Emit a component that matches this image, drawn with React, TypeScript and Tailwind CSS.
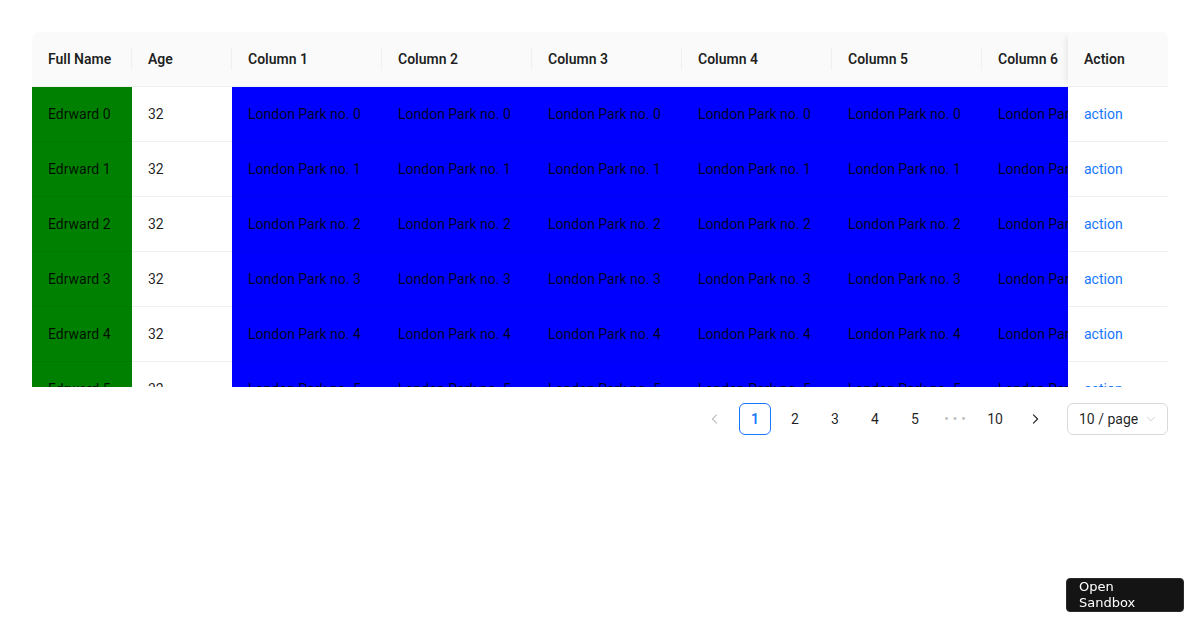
import { ChevronDown } from 'lucide-react'

const rows = Array.from({ length: 10 }, (_, i) => i)
const middleCols = [1, 2, 3, 4, 5, 6]

function Chevron({ dir, className }: { dir: 'left' | 'right'; className?: string }) {
  return (
    <svg width="12" height="12" viewBox="0 0 12 12" className={className} fill="none">
      <path
        d={dir === 'left' ? 'M7.6 1.8 3.4 6l4.2 4.2' : 'M4.4 1.8 8.6 6l-4.2 4.2'}
        stroke="currentColor"
        strokeWidth="1.1"
        strokeLinecap="round"
        strokeLinejoin="round"
      />
    </svg>
  )
}

function HeadCell({ label, width, last }: { label: string; width: string; last?: boolean }) {
  return (
    <div className={`flex h-full shrink-0 items-center justify-between pl-4 ${width}`}>
      <span className="font-semibold">{label}</span>
      {!last && <span className="h-[22px] w-px bg-[#f0f0f0]" />}
    </div>
  )
}

function Table() {
  return (
    <div className="overflow-hidden rounded-t-lg text-sm text-[rgba(0,0,0,0.88)]">
      {/* header */}
      <div className="flex h-[55px] border-b border-[#f0f0f0] bg-[#fafafa]">
        <HeadCell label="Full Name" width="w-[100px]" />
        <HeadCell label="Age" width="w-[100px]" />
        <div className="flex min-w-0 flex-1 overflow-hidden">
          {middleCols.map((c) => (
            <HeadCell key={c} label={`Column ${c}`} width="w-[150px]" last={c === 6} />
          ))}
        </div>
        <div className="flex w-[100px] shrink-0 items-center bg-[#fafafa] pl-4 font-semibold shadow-[-6px_0_6px_-4px_rgba(5,5,5,0.08)]">
          Action
        </div>
      </div>

      {/* body, scroll y 300 */}
      <div className="h-[300px] overflow-hidden">
        {rows.map((i) => (
          <div key={i} className="flex h-[55px]">
            <div className="flex w-[100px] shrink-0 items-center border-b border-black/5 bg-[#008000] pl-4">
              Edrward {i}
            </div>
            <div className="flex w-[100px] shrink-0 items-center border-b border-[#f0f0f0] bg-white pl-4">32</div>
            <div className="flex min-w-0 flex-1 overflow-hidden border-b border-black/5 bg-[#0000ff]">
              {middleCols.map((c) => (
                <div key={c} className="flex w-[150px] shrink-0 items-center whitespace-nowrap pl-4">
                  London Park no. {i}
                </div>
              ))}
            </div>
            <div className="flex w-[100px] shrink-0 items-center border-b border-[#f0f0f0] bg-white pl-4 text-[#1677ff] shadow-[-6px_0_6px_-4px_rgba(5,5,5,0.08)]">
              action
            </div>
          </div>
        ))}
      </div>
    </div>
  )
}

function Pagination() {
  const pages = ['1', '2', '3', '4', '5', '•••', '10']
  return (
    <div className="mt-4 flex items-center justify-end gap-2 text-sm text-[rgba(0,0,0,0.88)]">
      <div className="flex h-8 w-8 items-center justify-center text-[rgba(0,0,0,0.25)]">
        <Chevron dir="left" />
      </div>
      {pages.map((p) => (
        <div
          key={p}
          className={
            p === '1'
              ? 'flex h-8 min-w-8 items-center justify-center rounded-md border border-[#1677ff] font-semibold text-[#1677ff]'
              : p === '•••'
                ? "flex h-8 min-w-8 items-center justify-center pl-[2px] font-['DejaVu_Sans',sans-serif] text-[11px] tracking-[2px] text-[rgba(0,0,0,0.25)]"
                : 'flex h-8 min-w-8 items-center justify-center'
          }
        >
          {p}
        </div>
      ))}
      <div className="flex h-8 w-8 items-center justify-center">
        <Chevron dir="right" />
      </div>
      <div className="ml-2 flex h-8 w-[101px] items-center justify-between rounded-md border border-[#d9d9d9] bg-white pl-[11px] pr-[9px]">
        <span>10 / page</span>
        <ChevronDown size={14} strokeWidth={1.25} className="text-[rgba(0,0,0,0.25)]" />
      </div>
    </div>
  )
}

export default function App() {
  return (
    <div className="relative h-[630px] w-[1200px] bg-white p-8 font-['Roboto',sans-serif]">
      <Table />
      <Pagination />
      <div className="fixed bottom-[18px] right-4 flex w-[118px] flex-col rounded border border-[#2a2a2a] bg-[#141414] px-3 font-['DejaVu_Sans',sans-serif] text-[13px] leading-4 text-white">
        <span>Open</span>
        <span>Sandbox</span>
      </div>
    </div>
  )
}
